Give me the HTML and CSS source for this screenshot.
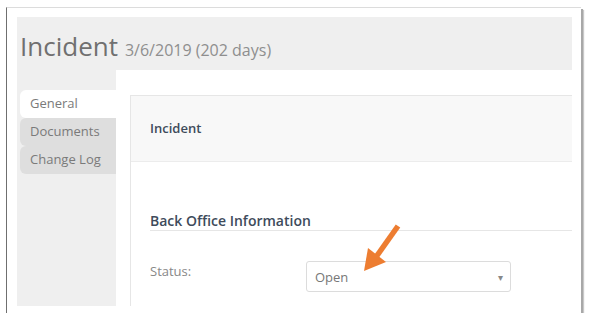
FILE: index.html
```html
<!DOCTYPE html>
<html lang="en">
<head>
    <meta charset="UTF-8">
    <title>Incident</title>
    <link rel="stylesheet" href="styles.css">
</head>
<body>
    <div class="shot">
        <div class="page-head">
            <span class="page-title">Incident</span>
            <span class="page-date">3/6/2019 (202 days)</span>
        </div>

        <div class="page-body">
            <div class="tabs">
                <div class="tab active">General</div>
                <div class="tab">Documents</div>
                <div class="tab">Change Log</div>
            </div>

            <div class="content">
                <div class="panel">
                    <div class="panel-head">Incident</div>
                    <div class="panel-body">
                        <h3 class="section-title">Back Office Information</h3>
                        <div class="field">
                            <label>Status:</label>
                            <div class="select">
                                <span>Open</span>
                                <span class="caret">&#9662;</span>
                            </div>
                        </div>
                    </div>
                </div>
            </div>
        </div>

        <!-- callout arrow -->
        <svg class="callout" width="70" height="70" viewBox="0 0 70 70">
            <line x1="57" y1="8" x2="35" y2="39" stroke="#ed7d31" stroke-width="5.5"/>
            <polygon points="23,53 27,30 45,44" fill="#ed7d31"/>
        </svg>
    </div>
</body>
</html>
```

FILE: styles.css
```css
body {
    margin: 0;
    background: #fff;
    font-family: 'Open Sans', sans-serif;
}

.shot {
    position: relative;
    margin: 7px 0 0 6px;
    width: 555px;
    height: 289px;
    padding: 9px 9px 7px 10px;
    background: #fff;
    border-left: 1px solid #6f6f6f;
    border-top: 1px solid #dcdcdc;
    box-shadow: 2px 2px 0 #a8a8a8, 3px 3px 1px #c8c8c8;
}

.page-head {
    height: 53px;
    background: #efefef;
    padding-left: 3px;
    display: flex;
    align-items: baseline;
    gap: 7px;
    line-height: 58px;
}

.page-title {
    font-size: 26px;
    color: #707070;
}

.page-date {
    font-size: 16px;
    color: #8e8e8e;
}

.page-body {
    display: flex;
    height: 236px;
}

.tabs {
    width: 96px;
    padding: 20px 0 0 3px;
    background: #efefef;
}

.tab {
    height: 28px;
    line-height: 27px;
    padding-left: 10px;
    font-size: 13px;
    color: #7a7a7a;
    background: #dedede;
    border-radius: 6px 0 0 6px;
}

.tab.active {
    background: #fff;
}

.content {
    flex: 1;
    padding: 25px 0 0 14px;
    overflow: hidden;
}

.panel {
    height: 100%;
    border-left: 1px solid #e6e6e6;
    border-top: 1px solid #e6e6e6;
}

.panel-head {
    height: 65px;
    line-height: 65px;
    padding-left: 19px;
    background: #f8f8f8;
    border-bottom: 1px solid #ececec;
    font-size: 13px;
    font-weight: 600;
    color: #3e4b5b;
}

.panel-body {
    padding-left: 19px;
}

.section-title {
    margin: 49px 0 0;
    padding-bottom: 0;
    border-bottom: 1px solid #e6e6e6;
    font-size: 14px;
    font-weight: 600;
    color: #3e4b5b;
}

.field {
    display: flex;
    align-items: flex-start;
    margin-top: 30px;
}

.field label {
    width: 156px;
    font-size: 13px;
    color: #888;
    line-height: 18px;
    padding-top: 1px;
}

.select {
    width: 188px;
    height: 29px;
    padding: 0 7px 0 8px;
    border: 1px solid #dcdcdc;
    border-radius: 3px;
    display: flex;
    align-items: center;
    justify-content: space-between;
    font-size: 13px;
    color: #777;
}

.caret {
    font-size: 10px;
    color: #888;
}

.callout {
    position: absolute;
    left: 334px;
    top: 210px;
}
```
